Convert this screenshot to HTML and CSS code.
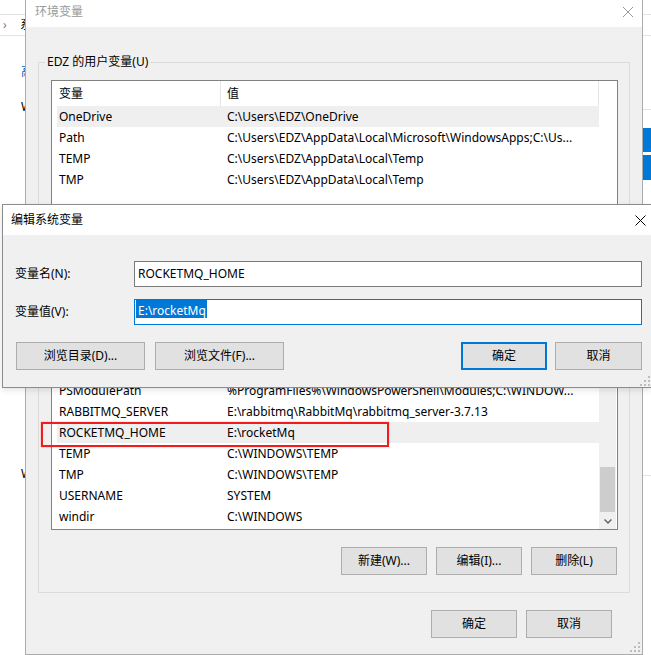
FILE: index.html
```html
<!DOCTYPE html>
<html lang="zh-CN">
<head>
    <meta charset="UTF-8">
    <title>环境变量</title>
    <link rel="stylesheet" href="styles.css">
</head>
<body>
<div class="page">
    <div class="crumbs"><span class="chev">›</span><span>系统</span></div>
    <div class="page-main">
        <a class="link">高级系统设置</a>
        <p class="line">Windows 规格</p>
        <p class="line low">Windows 激活</p>
    </div>
    <div class="page-side">
        <div class="side-rule"></div>
        <div class="side-btn"></div>
        <div class="side-btn tall"></div>
        <div class="side-rule low"></div>
    </div>

    <!-- 环境变量 window -->
    <section class="win env">
        <header class="titlebar">
            <span class="title">环境变量</span>
            <svg class="close" width="10" height="10" viewBox="0 0 10 10"><path d="M0 0L10 10M10 0L0 10" stroke="#9a9a9a" stroke-width="1"/></svg>
        </header>
        <div class="win-body">
            <div class="group user">
                <span class="group-title">EDZ 的用户变量(U)</span>
                <div class="list">
                    <div class="list-main">
                        <div class="list-head"><span>变量</span><span>值</span></div>
                        <div class="rows">
                            <div class="row sel"><span>OneDrive</span><span>C:\Users\EDZ\OneDrive</span></div>
                            <div class="row"><span>Path</span><span>C:\Users\EDZ\AppData\Local\Microsoft\WindowsApps;C:\Us...</span></div>
                            <div class="row"><span>TEMP</span><span>C:\Users\EDZ\AppData\Local\Temp</span></div>
                            <div class="row"><span>TMP</span><span>C:\Users\EDZ\AppData\Local\Temp</span></div>
                        </div>
                    </div>
                    <div class="list-gutter"></div>
                </div>
                <div class="btns">
                    <button class="btn">新建(N)...</button>
                    <button class="btn">编辑(E)...</button>
                    <button class="btn">删除(D)</button>
                </div>
            </div>

            <div class="group sys">
                <span class="group-title">系统变量(S)</span>
                <div class="list tall">
                    <div class="list-main">
                        <div class="list-head"><span>变量</span><span>值</span></div>
                        <div class="rows bottom">
                            <div class="row"><span>PROCESSOR_REVISION</span><span>9e0a</span></div>
                            <div class="row"><span>PSModulePath</span><span>%ProgramFiles%\WindowsPowerShell\Modules;C:\WINDOW...</span></div>
                            <div class="row"><span>RABBITMQ_SERVER</span><span>E:\rabbitmq\RabbitMq\rabbitmq_server-3.7.13</span></div>
                            <div class="row sel"><span>ROCKETMQ_HOME</span><span>E:\rocketMq</span></div>
                            <div class="row"><span>TEMP</span><span>C:\WINDOWS\TEMP</span></div>
                            <div class="row"><span>TMP</span><span>C:\WINDOWS\TEMP</span></div>
                            <div class="row"><span>USERNAME</span><span>SYSTEM</span></div>
                            <div class="row"><span>windir</span><span>C:\WINDOWS</span></div>
                        </div>
                    </div>
                    <div class="scrollbar">
                        <div class="thumb"></div>
                        <div class="arrow"><svg width="8" height="5" viewBox="0 0 8 5"><path d="M0.6 0.6L4 4L7.4 0.6" fill="none" stroke="#606060" stroke-width="1.4"/></svg></div>
                    </div>
                </div>
                <div class="btns">
                    <button class="btn">新建(W)...</button>
                    <button class="btn">编辑(I)...</button>
                    <button class="btn">删除(L)</button>
                </div>
            </div>

            <div class="btns foot">
                <button class="btn">确定</button>
                <button class="btn">取消</button>
            </div>
        </div>
        <svg class="grip" width="10" height="10" viewBox="0 0 10 10" fill="#bdbdbd">
            <rect x="8" y="0" width="2" height="2"/><rect x="8" y="4" width="2" height="2"/><rect x="4" y="4" width="2" height="2"/>
            <rect x="8" y="8" width="2" height="2"/><rect x="4" y="8" width="2" height="2"/><rect x="0" y="8" width="2" height="2"/>
        </svg>
    </section>

    <div class="mark"></div>

    <!-- 编辑系统变量 dialog -->
    <section class="win edit">
        <header class="titlebar">
            <span class="title">编辑系统变量</span>
            <svg class="close" width="11" height="11" viewBox="0 0 11 11"><path d="M0.5 0.5L10.5 10.5M10.5 0.5L0.5 10.5" stroke="#000" stroke-width="1"/></svg>
        </header>
        <div class="dlg-body">
            <label class="dlg-label">变量名(N):</label>
            <div class="field">ROCKETMQ_HOME</div>
            <label class="dlg-label">变量值(V):</label>
            <div class="field focus"><span class="picked">E:\rocketMq</span></div>
            <div class="dlg-btns">
                <button class="btn wide">浏览目录(D)...</button>
                <button class="btn wide">浏览文件(F)...</button>
                <button class="btn default push">确定</button>
                <button class="btn cancel">取消</button>
            </div>
        </div>
        <svg class="grip" width="10" height="10" viewBox="0 0 10 10" fill="#bdbdbd">
            <rect x="8" y="0" width="2" height="2"/><rect x="8" y="4" width="2" height="2"/><rect x="4" y="4" width="2" height="2"/>
            <rect x="8" y="8" width="2" height="2"/><rect x="4" y="8" width="2" height="2"/><rect x="0" y="8" width="2" height="2"/>
        </svg>
    </section>
</div>
</body>
</html>
```

FILE: styles.css
```css
*{margin:0; padding:0; box-sizing:border-box;}
html,body{width:100%; height:100%; overflow:hidden; background:#fff;}
body{font:12px/16px "Noto Sans","Noto Sans CJK SC",sans-serif; color:#000;}
button{font:inherit; color:inherit;}

/* page behind the windows */
.page{position:relative; height:100%; display:grid; grid-template-columns:643px 1fr; align-content:start;}
.crumbs{
    grid-column:1/-1; margin-top:14px; height:22px;
    border-top:1px solid #e3e3e3; border-bottom:1px solid #e3e3e3;
    display:flex; align-items:center; padding-left:3px;
}
.chev{width:17px; color:#777;}
.page-main{padding-left:21px;}
.link{display:block; margin-top:28px; color:#0063b1;}
.line{margin-top:19px;}
.line.low{margin-top:351px;}
.side-rule{margin-top:73px; border-top:1px solid #e3e3e3;}
.side-rule.low{margin-top:295px;}
.side-btn{margin-top:18px; height:24px; background:#0078d7;}
.side-btn.tall{margin-top:3px; height:25px;}

/* windows */
.win{position:absolute;}
.titlebar{height:30px; background:#fff; display:flex; align-items:center; justify-content:space-between;}
.env{left:25px; top:-4px; width:618px; border:1px solid #ababab; background:#f0f0f0;}
.env .titlebar{padding:0 9px 0 9px;}
.env .title{color:#999;}
.win-body{padding:35px 12px 16px;}

.group{position:relative; border:1px solid #dcdcdc; padding:17px 11px 15px 12px;}
.group.sys{margin-top:14px; padding-bottom:17px;}
.group-title{position:absolute; top:-9px; left:6px; padding:0 2px; background:#f0f0f0;}

.list{
    height:150px; border:1px solid #828282; background:#fff;
    display:grid; grid-template-columns:547px 17px; padding-right:1px;
}
.list.tall{height:207px;}
.list-main{display:flex; flex-direction:column; overflow:hidden; min-height:0;}
.list-head{
    height:25px; flex:none; margin-left:5px;
    display:grid; grid-template-columns:164px 1fr; align-items:stretch;
}
.list-head span{display:flex; align-items:center; padding-left:2px; border-right:1px solid #e5e5e5;}
.list-head span+span{padding-left:6px;}
.rows{display:flex; flex-direction:column;}
.rows.bottom{flex:1; min-height:0; justify-content:flex-end; overflow:hidden; padding-bottom:2px;}
.row{
    flex:none; height:21px; margin-left:5px;
    display:grid; grid-template-columns:168px 1fr; align-items:center; white-space:nowrap;
}
.row span{padding-left:2px; overflow:hidden;}
.row.sel{background:#efefef;}

.scrollbar{background:#f0f0f0; display:flex; flex-direction:column; justify-content:flex-end;}
.thumb{height:45px; margin:0 1px; background:#cdcdcd;}
.arrow{height:17px; display:flex; align-items:center; justify-content:center; padding-top:1px;}

.btn{
    width:86px; height:28px; background:#e1e1e1; border:1px solid #adadad;
    display:flex; align-items:center; justify-content:center; flex:none;
}
.btn.default{border:2px solid #0078d7;}
.btns{margin-top:17px; display:flex; justify-content:flex-end; gap:9px; padding-right:1px;}
.btns.foot{padding-right:18px;}

.grip{position:absolute; right:2px; bottom:2px;}

/* red highlight around the new variable */
.mark{
    position:absolute; left:41px; top:422px; width:348px; height:25px;
    border:2px solid #f21c1c; box-shadow:0 0 1px rgba(255,0,0,.6);
}

/* edit dialog */
.edit{left:2px; top:204px; width:650px; border:1px solid #8c8c8c; background:#f0f0f0; box-shadow:0 2px 6px rgba(0,0,0,.12);}
.edit .titlebar{padding:0 5px 0 8px;}
.dlg-body{
    display:grid; grid-template-columns:119px 1fr; row-gap:12px;
    padding:26px 9px 17px 12px;
}
.dlg-label{display:flex; align-items:center; height:26px;}
.field{
    height:26px; border:1px solid #7a7a7a; background:#fff;
    display:flex; align-items:center; padding-left:3px; white-space:nowrap;
}
.field.focus{border-color:#0078d7; padding-left:1px; align-items:flex-start;}
.picked{display:block; height:18px; line-height:22px; padding:0 1px 0 2px; background:#0078d7; color:#fff; overflow:visible;}
.dlg-btns{grid-column:1/-1; margin-top:5px; margin-left:1px; display:flex; gap:10px;}
.btn.wide{width:129px;}
.btn.push{margin-left:auto;}
.btn.cancel{width:87px; margin-left:-2px;}
.edit .grip{right:1px; bottom:1px;}
```
